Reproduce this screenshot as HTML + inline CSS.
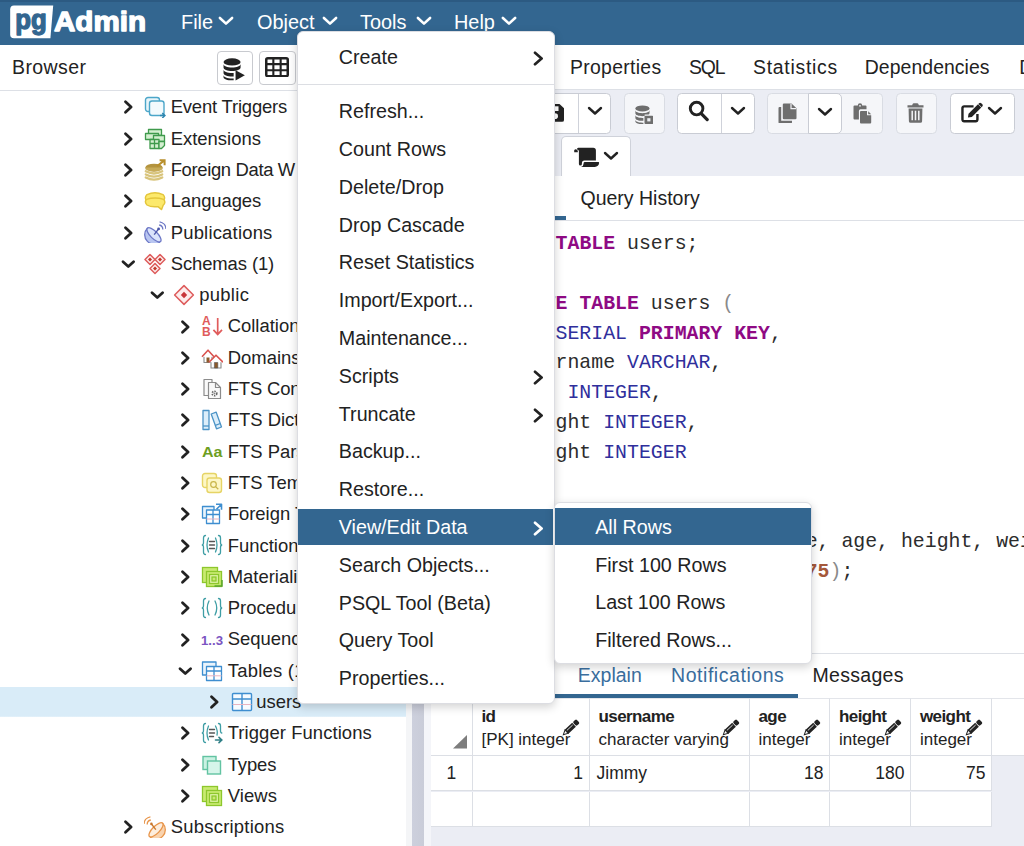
<!DOCTYPE html>
<html>
<head>
<meta charset="utf-8">
<title>pgAdmin</title>
<style>
*{box-sizing:border-box;}
html,body{margin:0;padding:0;}
body{width:1024px;height:846px;overflow:hidden;position:relative;background:#fff;font-family:"Liberation Sans",sans-serif;color:#222;font-size:19.6px;}
.abs{position:absolute;}
svg{display:block;}
/* header */
#hdr{left:0;top:0;width:1024px;height:45px;background:#336690;border-top:2px solid #2c5a82;}
.mi{position:absolute;top:11px;color:#fff;font-size:19.9px;line-height:22px;white-space:nowrap;}
.chev{position:absolute;}
/* browser bar */
#bbar{left:0;top:45px;width:412px;height:45.6px;background:#fff;border-bottom:1px solid #dde0e6;}
#bbar .t{position:absolute;left:12px;top:11px;font-size:19.5px;line-height:22px;letter-spacing:.4px;}
.bbtn{position:absolute;top:6.2px;width:36px;height:33.8px;border:1px solid #c8cacf;border-radius:4px;background:#fff;}
/* tree */
#tree{left:0;top:90.6px;width:406px;height:756px;background:#fff;overflow:hidden;}
.row{position:relative;height:31.3px;white-space:nowrap;font-size:18.45px;line-height:31.3px;}
.row.sel{background:linear-gradient(#d9ecf8,#d9ecf8) 0 0.9px/100% 29.8px no-repeat;}
.row .ar{position:absolute;top:8.1px;}
.row .ad{top:11.3px;margin-left:-1.6px;}
.row .ic{position:absolute;top:4.9px;margin-left:0.4px;}
.row .tx{position:absolute;top:0;margin-left:-0.3px;}
.l1 .ar{left:123px}.l1 .ic{left:144px}.l1 .tx{left:171px}
.l2 .ar{left:151.5px}.l2 .ic{left:172.5px}.l2 .tx{left:199.5px}
.l3 .ar{left:180px}.l3 .ic{left:201px}.l3 .tx{left:228px}
.l4 .ar{left:208.5px}.l4 .ic{left:230.5px}.l4 .tx{left:256.5px}
/* splitter */
#split{left:412.3px;top:90px;width:11.4px;height:756px;background:linear-gradient(90deg,#cdd0dd,#c9ccd8);}
#splitr{left:423.7px;top:90px;width:7.1px;height:756px;background:#f4f5f9;}
#splitl{left:405.6px;top:90px;width:6.7px;height:756px;background:#f4f5f7;}
/* right */
#rbg{left:423.5px;top:45px;width:601px;height:801px;background:#ebedf4;}
#tabs{left:423.5px;top:45px;width:601px;height:45.4px;background:#fff;border-bottom:1px solid #dde0e6;}
#tabs span{position:absolute;top:11px;font-size:19.4px;line-height:22px;white-space:nowrap;}
.tb{position:absolute;top:93px;height:41.4px;border:1px solid #c9ccd4;background:#fff;border-radius:4.5px;}
.tb.dis{background:#f5f6f9;border-color:#d9dce3;}
#qh{left:431px;top:176px;width:593px;height:45px;background:#fff;border-bottom:1px solid #dde0e6;}
#code{left:431px;top:221px;width:593px;height:432px;background:#fff;font-family:"Liberation Mono",monospace;font-size:19.85px;}
.cl{position:absolute;left:65px;white-space:pre;line-height:30px;height:30px;color:#2c2c2c;}
.k{color:#8f0a84;font-weight:bold;}
.ty{color:#2f2f9c;}
.br{color:#8a8a8a;}
.nu{color:#a5583a;font-weight:bold;}
#ltabs{left:431px;top:652.5px;width:593px;height:46px;background:#fff;border-top:1px solid #dde0e6;}
#ltabs span{position:absolute;top:11.5px;font-size:19.5px;line-height:22px;white-space:nowrap;}
/* grid */
#grid{left:431px;top:698px;width:593px;height:148px;}
.gh{position:absolute;top:0;height:57.7px;background:#fff;border-right:1px solid #dcdfe5;border-bottom:1px solid #dcdfe5;border-top:1px solid #e3e5ea;}
.gh b{position:absolute;left:9px;top:8.3px;font-size:17px;letter-spacing:-0.6px;line-height:20px;color:#222;}
.gh i{position:absolute;left:9px;top:30.7px;font-size:17px;line-height:20px;font-style:normal;color:#222;white-space:nowrap;}
.gc{position:absolute;height:35.8px;background:#fff;border-right:1px solid #dcdfe5;border-bottom:1px solid #dcdfe5;font-size:17.5px;line-height:35px;padding:0 5.5px 0 7px;}
.gc.c{text-align:center;padding:0;}
.gc.r{text-align:right;}
/* menu */
.menu{background:#fff;border:1px solid #dcdde2;border-radius:6px;box-shadow:0 3px 10px rgba(0,0,0,.18);}
.it{position:absolute;left:0;width:100%;height:37.8px;line-height:37.8px;font-size:19.7px;white-space:nowrap;color:#222;}
.it span{position:absolute;left:40.5px;top:1.2px;}
.it.hl{background:#336690;color:#fff;}
.it.hl.m{background:linear-gradient(#336690,#336690) 0 1.2px/calc(100% - 1px) 36.3px no-repeat;}
.it svg{position:absolute;right:9.55px;top:13.1px;}
</style>
</head>
<body>
<div id="hdr" class="abs">
<svg class="abs" style="left:0;top:-2px" width="160" height="45" viewBox="0 0 160 45">
<path d="M14 5.5 H53.2 L50.4 38.3 H14 Q10.2 38.3 10.2 34.5 V9.3 Q10.2 5.5 14 5.5 Z" fill="#fff"/>
<text x="15.3" y="29.3" font-family="Liberation Sans" font-weight="bold" font-size="27" fill="#336690" textLength="31.5" lengthAdjust="spacingAndGlyphs" stroke="#336690" stroke-width="1.3" stroke-linejoin="round">pg</text>
<text x="54" y="30.5" font-family="Liberation Sans" font-weight="bold" font-size="26.8" fill="#fff" textLength="92" lengthAdjust="spacingAndGlyphs" stroke="#fff" stroke-width="1.3" stroke-linejoin="round">Admin</text>
</svg>
<div class="mi" style="left:181px;top:9px">File</div><svg class="chev" style="left:218px;top:14.2px" width="16" height="11" viewBox="0 0 16 11"><path d="M1.9 2 L8 7.6 L14.1 2" fill="none" stroke="#fff" stroke-width="2.6" stroke-linecap="round" stroke-linejoin="round"/></svg>
<div class="mi" style="left:257px;top:9px">Object</div><svg class="chev" style="left:322px;top:14.2px" width="16" height="11" viewBox="0 0 16 11"><path d="M1.9 2 L8 7.6 L14.1 2" fill="none" stroke="#fff" stroke-width="2.6" stroke-linecap="round" stroke-linejoin="round"/></svg>
<div class="mi" style="left:360px;top:9px">Tools</div><svg class="chev" style="left:416px;top:14.2px" width="16" height="11" viewBox="0 0 16 11"><path d="M1.9 2 L8 7.6 L14.1 2" fill="none" stroke="#fff" stroke-width="2.6" stroke-linecap="round" stroke-linejoin="round"/></svg>
<div class="mi" style="left:454px;top:9px">Help</div><svg class="chev" style="left:501px;top:14.2px" width="16" height="11" viewBox="0 0 16 11"><path d="M1.9 2 L8 7.6 L14.1 2" fill="none" stroke="#fff" stroke-width="2.6" stroke-linecap="round" stroke-linejoin="round"/></svg>
</div>
<div id="bbar" class="abs"><span class="t">Browser</span>
<div class="bbtn" style="left:216.5px"><svg style="margin:5.8px 0 0 5.6px" width="22.4" height="23" viewBox="0 0 21 21" preserveAspectRatio="none"><g fill="#222"><ellipse cx="8.5" cy="3.6" rx="8" ry="3.3"/><path d="M0.5 5.5 c0 1.8 3.6 3.2 8 3.2 s8 -1.4 8 -3.2 v3.2 c0 1.8 -3.6 3.2 -8 3.2 s-8 -1.4 -8 -3.2z"/><path d="M0.5 10.6 c0 1.8 3.6 3.2 8 3.2 c0.5 0 1 0 1.5 -0.1 v3.2 c-0.5 0.1 -1 0.1 -1.5 0.1 c-4.4 0 -8 -1.4 -8 -3.2z"/><path d="M0.5 15.6 c0 1.8 3.6 3.2 8 3.2 c0.5 0 1 0 1.5 -0.1 v1.6 c-0.5 0.1 -1 0.1 -1.5 0.1 c-4.4 0 -8 -1.1 -8 -2.9z"/><path d="M11.8 11.2 L20.5 15.8 L11.8 20.5Z"/></g></svg></div>
<div class="bbtn" style="left:259px;width:36.5px"><svg style="margin:4.9px 0 0 5.2px" width="24" height="20.4" preserveAspectRatio="none" viewBox="0 0 23 20"><rect x="1.2" y="1.2" width="20.6" height="17.6" rx="1.5" fill="none" stroke="#222" stroke-width="2.4"/><path d="M1 7 h21 M1 13 h21 M8 1 v18 M15 1 v18" stroke="#222" stroke-width="2"/></svg></div>
</div>
<div id="tree" class="abs"><div style="height:0.8px"></div>
<div class="row l1"><svg class="ar" viewBox="0 0 12 16" width="12" height="16"><path d="M2.5 2.8 L8.1 8 L2.5 13.2" fill="none" stroke="#222" stroke-width="2.8" stroke-linecap="round" stroke-linejoin="round"/></svg><svg class="ic" viewBox="0 0 22 22" width="22" height="22"><rect x="1.5" y="1.5" width="14" height="14" rx="2.5" fill="#e8f5fa" stroke="#4ca6c9" stroke-width="1.4"/><rect x="5.5" y="5" width="14.5" height="14.5" rx="2.5" fill="#f2fafd" stroke="#4ca6c9" stroke-width="1.4"/><path d="M16 19.5 h4 M18.3 17 l2.6 2.5 l-2.6 2.5" fill="none" stroke="#2f86b0" stroke-width="1.5"/></svg><span class="tx" style="letter-spacing:-0.18px">Event Triggers</span></div>
<div class="row l1"><svg class="ar" viewBox="0 0 12 16" width="12" height="16"><path d="M2.5 2.8 L8.1 8 L2.5 13.2" fill="none" stroke="#222" stroke-width="2.8" stroke-linecap="round" stroke-linejoin="round"/></svg><svg class="ic" viewBox="0 0 22 22" width="22" height="22"><g fill="#d4efd0" stroke="#3f9a4c" stroke-width="1.3" stroke-linejoin="round"><rect x="4.5" y="1.5" width="13" height="6"/><rect x="1.5" y="5.5" width="13" height="6"/><rect x="9.5" y="7.5" width="11" height="6"/><rect x="6" y="11.5" width="9" height="9"/><path d="M15 13.5 h5.5 v4 l-3 3 h-2.5z"/><path d="M6 15.5 h9 M10.5 11.5 v9"/></g></svg><span class="tx">Extensions</span></div>
<div class="row l1"><svg class="ar" viewBox="0 0 12 16" width="12" height="16"><path d="M2.5 2.8 L8.1 8 L2.5 13.2" fill="none" stroke="#222" stroke-width="2.8" stroke-linecap="round" stroke-linejoin="round"/></svg><svg class="ic" viewBox="0 0 22 22" width="22" height="22"><g fill="none" stroke="#d8c47c" stroke-width="2.3" stroke-linecap="round"><path d="M1.8 12.2 Q10 16.8 18.2 12.2"/><path d="M1.8 15.4 Q10 20 18.2 15.4"/><path d="M1.8 18.4 Q10 23 18.2 18.4"/></g><ellipse cx="10" cy="8.6" rx="8.6" ry="3.9" fill="#b3933e"/><path d="M1.4 8.6 v1.6 q8.6 5 17.2 0 v-1.6z" fill="#c7ab58"/><path d="M13 7.2 L20 1.6 M15.6 1.2 h5 v5" fill="none" stroke="#b88f2c" stroke-width="2"/></svg><span class="tx" style="letter-spacing:-0.35px">Foreign Data W</span></div>
<div class="row l1"><svg class="ar" viewBox="0 0 12 16" width="12" height="16"><path d="M2.5 2.8 L8.1 8 L2.5 13.2" fill="none" stroke="#222" stroke-width="2.8" stroke-linecap="round" stroke-linejoin="round"/></svg><svg class="ic" viewBox="0 0 22 22" width="22" height="22"><g fill="#fce96c" stroke="#e4c63c" stroke-width="1.4" stroke-linejoin="round"><path d="M3 4.6 Q11 0.8 19 4.6 Q22.3 8 19 11 Q11 14 3 11 Q-0.3 8 3 4.6Z"/><path d="M2.6 9.3 Q11 6.6 19.6 9.3 Q22.3 12.6 19.2 15.3 L17.6 19.6 L14 16.6 Q7 17.4 3 15 Q0 12 2.6 9.3Z"/></g></svg><span class="tx" style="letter-spacing:-0.1px">Languages</span></div>
<div class="row l1"><svg class="ar" viewBox="0 0 12 16" width="12" height="16"><path d="M2.5 2.8 L8.1 8 L2.5 13.2" fill="none" stroke="#222" stroke-width="2.8" stroke-linecap="round" stroke-linejoin="round"/></svg><svg class="ic" viewBox="0 0 22 22" width="22" height="22"><g stroke="#6d78c6" stroke-width="1.3" stroke-linejoin="round"><path d="M3.4 7.2 A9.3 9.3 0 0 0 16.6 20.4 Z" fill="#b9c6f1"/><ellipse cx="10" cy="13.8" rx="9.3" ry="3.6" transform="rotate(45 10 13.8)" fill="#dbe4fb"/><path d="M10.2 13.6 L14.2 8.4" stroke="#4a55a8" stroke-width="1.4" fill="none"/><circle cx="14.6" cy="7.9" r="1.4" fill="#4a55a8" stroke="none"/><path d="M15.2 4 A4.4 4.4 0 0 1 18.8 8.4" fill="none"/><path d="M15.6 0.8 A7.6 7.6 0 0 1 22 8" fill="none"/></g></svg><span class="tx" style="letter-spacing:0.2px">Publications</span></div>
<div class="row l1"><svg class="ar ad" viewBox="0 0 15 10" width="15" height="10"><path d="M2 2.8 L7.3 7.5 L12.6 2.8" fill="none" stroke="#222" stroke-width="2.8" stroke-linecap="round" stroke-linejoin="round"/></svg><svg class="ic" viewBox="0 0 22 22" width="22" height="22"><path d="M6 1.5 L11 6.5 L6 11.5 L1 6.5Z" fill="#fdecec" stroke="#de5c5c" stroke-width="1.5" stroke-linejoin="round"/><path d="M6 4.5 L8.0 6.5 L6 8.5 L4.0 6.5Z" fill="#c0392b"/><path d="M16 1.5 L21 6.5 L16 11.5 L11 6.5Z" fill="#fdecec" stroke="#de5c5c" stroke-width="1.5" stroke-linejoin="round"/><path d="M16 4.5 L18.0 6.5 L16 8.5 L14.0 6.5Z" fill="#c0392b"/><path d="M11 10.5 L16 15.5 L11 20.5 L6 15.5Z" fill="#fdecec" stroke="#de5c5c" stroke-width="1.5" stroke-linejoin="round"/><path d="M11 13.5 L13.0 15.5 L11 17.5 L9.0 15.5Z" fill="#c0392b"/></svg><span class="tx" style="letter-spacing:-0.1px">Schemas (1)</span></div>
<div class="row l2"><svg class="ar ad" viewBox="0 0 15 10" width="15" height="10"><path d="M2 2.8 L7.3 7.5 L12.6 2.8" fill="none" stroke="#222" stroke-width="2.8" stroke-linecap="round" stroke-linejoin="round"/></svg><svg class="ic" viewBox="0 0 22 22" width="22" height="22"><path d="M11 1.6 L20.4 11 L11 20.4 L1.6 11Z" fill="#fdecec" stroke="#de5c5c" stroke-width="1.5" stroke-linejoin="round"/><path d="M11 7.8 L14.2 11 L11 14.2 L7.8 11Z" fill="#c7353a"/></svg><span class="tx" style="letter-spacing:0.3px">public</span></div>
<div class="row l3"><svg class="ar" viewBox="0 0 12 16" width="12" height="16"><path d="M2.5 2.8 L8.1 8 L2.5 13.2" fill="none" stroke="#222" stroke-width="2.8" stroke-linecap="round" stroke-linejoin="round"/></svg><svg class="ic" viewBox="0 0 22 22" width="22" height="22"><text x="1" y="10" font-family="Liberation Sans" font-weight="bold" font-size="12" fill="#e05c5c">A</text><text x="1" y="21.3" font-family="Liberation Sans" font-weight="bold" font-size="12" fill="#e05c5c">B</text><path d="M16.7 3 V19 M12.4 14.8 L16.7 19.4 L21 14.8" fill="none" stroke="#e05c5c" stroke-width="1.7"/></svg><span class="tx">Collations</span></div>
<div class="row l3"><svg class="ar" viewBox="0 0 12 16" width="12" height="16"><path d="M2.5 2.8 L8.1 8 L2.5 13.2" fill="none" stroke="#222" stroke-width="2.8" stroke-linecap="round" stroke-linejoin="round"/></svg><svg class="ic" viewBox="0 0 22 22" width="22" height="22"><g stroke-linejoin="round"><path d="M3 9.5 V15.5 H11 V9.5" fill="#fff" stroke="#8a8a8a" stroke-width="1.1"/><path d="M1 9.8 L7 3.2 L13 9.8" fill="#fff" stroke="#d9534f" stroke-width="1.6"/><rect x="5.5" y="10.5" width="3" height="5" fill="#8b5a2b"/><path d="M10 15 V21 H20 V15" fill="#fff" stroke="#8a8a8a" stroke-width="1.1"/><path d="M8 15.2 L15 8.2 L22 15.2" fill="#fff" stroke="#d9534f" stroke-width="1.6"/><rect x="13.4" y="15.5" width="3.4" height="5.5" fill="#8b5a2b" stroke="#555" stroke-width="0.6"/></g></svg><span class="tx">Domains</span></div>
<div class="row l3"><svg class="ar" viewBox="0 0 12 16" width="12" height="16"><path d="M2.5 2.8 L8.1 8 L2.5 13.2" fill="none" stroke="#222" stroke-width="2.8" stroke-linecap="round" stroke-linejoin="round"/></svg><svg class="ic" viewBox="0 0 22 22" width="22" height="22"><g fill="#fafafa" stroke="#8c8c8c" stroke-width="1.2" stroke-linejoin="round"><path d="M3 1.5 H11 V17.5 H3Z"/><path d="M7.5 4.5 H14.5 L19.5 9.5 V20.5 H7.5Z"/><path d="M14.5 4.5 V9.5 H19.5" fill="none"/></g><circle cx="13.5" cy="15.5" r="2.3" fill="none" stroke="#666" stroke-width="1.6" stroke-dasharray="1.4 1"/><circle cx="13.5" cy="15.5" r="1" fill="#888"/></svg><span class="tx" style="letter-spacing:-0.15px">FTS Configurations</span></div>
<div class="row l3"><svg class="ar" viewBox="0 0 12 16" width="12" height="16"><path d="M2.5 2.8 L8.1 8 L2.5 13.2" fill="none" stroke="#222" stroke-width="2.8" stroke-linecap="round" stroke-linejoin="round"/></svg><svg class="ic" viewBox="0 0 22 22" width="22" height="22"><g fill="#dceefa" stroke="#4b93c6" stroke-width="1.3" stroke-linejoin="round"><rect x="2" y="1.5" width="6" height="19"/><path d="M2 17 h6" /><path d="M10.2 5 L15.2 3.2 L20.5 18 L15.5 19.8Z"/><path d="M14.3 16.3 L19.3 14.5"/></g></svg><span class="tx">FTS Dictionaries</span></div>
<div class="row l3"><svg class="ar" viewBox="0 0 12 16" width="12" height="16"><path d="M2.5 2.8 L8.1 8 L2.5 13.2" fill="none" stroke="#222" stroke-width="2.8" stroke-linecap="round" stroke-linejoin="round"/></svg><svg class="ic" viewBox="0 0 22 22" width="22" height="22"><text x="1" y="16.2" font-family="Liberation Sans" font-weight="bold" font-size="15" fill="#6d9e1f" textLength="20.5" lengthAdjust="spacingAndGlyphs">Aa</text></svg><span class="tx">FTS Parsers</span></div>
<div class="row l3"><svg class="ar" viewBox="0 0 12 16" width="12" height="16"><path d="M2.5 2.8 L8.1 8 L2.5 13.2" fill="none" stroke="#222" stroke-width="2.8" stroke-linecap="round" stroke-linejoin="round"/></svg><svg class="ic" viewBox="0 0 22 22" width="22" height="22"><g fill="#fdf7c6" stroke="#e6d465" stroke-width="1.4"><rect x="1.5" y="1.5" width="14" height="14" rx="2.5"/><rect x="6" y="6" width="14.5" height="14.5" rx="2.5"/></g><circle cx="12.5" cy="12.5" r="2.8" fill="none" stroke="#c9b64a" stroke-width="1.2"/><path d="M14.6 14.6 L17.3 17.3" stroke="#c9b64a" stroke-width="1.3"/></svg><span class="tx">FTS Templates</span></div>
<div class="row l3"><svg class="ar" viewBox="0 0 12 16" width="12" height="16"><path d="M2.5 2.8 L8.1 8 L2.5 13.2" fill="none" stroke="#222" stroke-width="2.8" stroke-linecap="round" stroke-linejoin="round"/></svg><svg class="ic" viewBox="0 0 22 22" width="22" height="22"><g stroke="#3e8ed0" stroke-width="1.3" fill="#eaf4fc" stroke-linejoin="round"><path d="M1.5 3.5 H13 V15 H1.5Z"/><rect x="5.5" y="7" width="13" height="13.5" fill="#fff"/><path d="M5.5 11.5 h13 M12 7 v13.5" fill="none"/><path d="M5.5 16 h13" stroke="#e8b4c0" stroke-width="1"/><path d="M15 1.3 h5.5 v5.5 M20.5 1.3 L15.5 6.3" fill="none" stroke-width="1.6"/></g></svg><span class="tx">Foreign Tables</span></div>
<div class="row l3"><svg class="ar" viewBox="0 0 12 16" width="12" height="16"><path d="M2.5 2.8 L8.1 8 L2.5 13.2" fill="none" stroke="#222" stroke-width="2.8" stroke-linecap="round" stroke-linejoin="round"/></svg><svg class="ic" viewBox="0 0 22 22" width="22" height="22"><g fill="none" stroke="#3f9ea5" stroke-width="1.3" stroke-linecap="round"><path d="M4.5 1.5 Q2.5 1.5 2.5 4 V8.5 Q2.5 11 0.8 11 Q2.5 11 2.5 13.5 V18 Q2.5 20.5 4.5 20.5"/><path d="M17.5 1.5 Q19.5 1.5 19.5 4 V8.5 Q19.5 11 21.2 11 Q19.5 11 19.5 13.5 V18 Q19.5 20.5 17.5 20.5"/><path d="M7.5 4 Q4.5 11 7.5 18"/><path d="M14.5 4 Q17.5 11 14.5 18"/><path d="M8.5 7.5 h5 M8.5 11 h5 M8.5 14.5 h5" stroke="#555" stroke-width="1.4"/></g></svg><span class="tx">Functions</span></div>
<div class="row l3"><svg class="ar" viewBox="0 0 12 16" width="12" height="16"><path d="M2.5 2.8 L8.1 8 L2.5 13.2" fill="none" stroke="#222" stroke-width="2.8" stroke-linecap="round" stroke-linejoin="round"/></svg><svg class="ic" viewBox="0 0 22 22" width="22" height="22"><g fill="#c9ea72" stroke="#8dc72c" stroke-width="1.3"><rect x="1.5" y="1.5" width="15" height="15"/><rect x="5.5" y="5.5" width="15" height="15"/><rect x="8.5" y="8.5" width="9" height="9" fill="#e3f5b0"/><rect x="11" y="11" width="4" height="4" fill="#c9ea72"/></g><path d="M13.5 20 h7.5 v-6" fill="none" stroke="#5aa52c" stroke-width="1.5"/></svg><span class="tx">Materialized Views</span></div>
<div class="row l3"><svg class="ar" viewBox="0 0 12 16" width="12" height="16"><path d="M2.5 2.8 L8.1 8 L2.5 13.2" fill="none" stroke="#222" stroke-width="2.8" stroke-linecap="round" stroke-linejoin="round"/></svg><svg class="ic" viewBox="0 0 22 22" width="22" height="22"><g fill="none" stroke="#3f9ea5" stroke-width="1.3" stroke-linecap="round"><path d="M4.5 1.5 Q2.5 1.5 2.5 4 V8.5 Q2.5 11 0.8 11 Q2.5 11 2.5 13.5 V18 Q2.5 20.5 4.5 20.5"/><path d="M17.5 1.5 Q19.5 1.5 19.5 4 V8.5 Q19.5 11 21.2 11 Q19.5 11 19.5 13.5 V18 Q19.5 20.5 17.5 20.5"/><path d="M8 4 Q4.5 11 8 18"/><path d="M14 4 Q17.5 11 14 18"/></g></svg><span class="tx">Procedures</span></div>
<div class="row l3"><svg class="ar" viewBox="0 0 12 16" width="12" height="16"><path d="M2.5 2.8 L8.1 8 L2.5 13.2" fill="none" stroke="#222" stroke-width="2.8" stroke-linecap="round" stroke-linejoin="round"/></svg><svg class="ic" viewBox="0 0 22 22" width="22" height="22"><text x="0" y="16.5" font-family="Liberation Sans" font-weight="bold" font-size="13" fill="#7b55c2" textLength="22" lengthAdjust="spacingAndGlyphs">1..3</text></svg><span class="tx">Sequences</span></div>
<div class="row l3"><svg class="ar ad" viewBox="0 0 15 10" width="15" height="10"><path d="M2 2.8 L7.3 7.5 L12.6 2.8" fill="none" stroke="#222" stroke-width="2.8" stroke-linecap="round" stroke-linejoin="round"/></svg><svg class="ic" viewBox="0 0 22 22" width="22" height="22"><g stroke="#3e8ed0" stroke-width="1.3" fill="#eaf4fc" stroke-linejoin="round"><path d="M1.5 2 H15 V15 H1.5Z"/><rect x="5.5" y="6.5" width="15" height="14" fill="#fff"/><path d="M5.5 11 h15 M13 6.5 v14" fill="none"/><path d="M5.5 15.8 h15" stroke="#e8b4c0" stroke-width="1"/></g></svg><span class="tx" style="letter-spacing:0.25px">Tables (1)</span></div>
<div class="row l4 sel"><svg class="ar" viewBox="0 0 12 16" width="12" height="16"><path d="M2.5 2.8 L8.1 8 L2.5 13.2" fill="none" stroke="#222" stroke-width="2.8" stroke-linecap="round" stroke-linejoin="round"/></svg><svg class="ic" viewBox="0 0 22 22" width="22" height="22"><g stroke="#3e8ed0" stroke-width="1.4" fill="#f6fbff" stroke-linejoin="round"><rect x="1.5" y="2.5" width="19" height="17" rx="1"/><path d="M1.5 8 h19 M11 2.5 v17" fill="none"/><path d="M1.5 13.5 h19" stroke="#e8b4c0" stroke-width="1"/></g></svg><span class="tx">users</span></div>
<div class="row l3"><svg class="ar" viewBox="0 0 12 16" width="12" height="16"><path d="M2.5 2.8 L8.1 8 L2.5 13.2" fill="none" stroke="#222" stroke-width="2.8" stroke-linecap="round" stroke-linejoin="round"/></svg><svg class="ic" viewBox="0 0 22 22" width="22" height="22"><g fill="none" stroke="#3f9ea5" stroke-width="1.3" stroke-linecap="round"><path d="M4.5 1.5 Q2.5 1.5 2.5 4 V8.5 Q2.5 11 0.8 11 Q2.5 11 2.5 13.5 V18 Q2.5 20.5 4.5 20.5"/><path d="M17.5 1.5 Q19.5 1.5 19.5 4 V8.5 Q19.5 11 20.8 11"/><path d="M7.5 4 Q4.5 11 7.5 18"/><path d="M14.5 4 Q17 9 16 13"/><path d="M8.5 7.5 h5 M8.5 11 h5 M8.5 14.5 h4" stroke="#555" stroke-width="1.4"/><path d="M14.5 18 h5.5 M18 15.3 l2.8 2.7 l-2.8 2.7" stroke="#2f7f86" stroke-width="1.6"/></g></svg><span class="tx" style="letter-spacing:0.08px">Trigger Functions</span></div>
<div class="row l3"><svg class="ar" viewBox="0 0 12 16" width="12" height="16"><path d="M2.5 2.8 L8.1 8 L2.5 13.2" fill="none" stroke="#222" stroke-width="2.8" stroke-linecap="round" stroke-linejoin="round"/></svg><svg class="ic" viewBox="0 0 22 22" width="22" height="22"><g fill="#c9f1e2" stroke="#62c3a2" stroke-width="1.4"><rect x="2" y="2.5" width="13" height="13"/><rect x="6.5" y="7" width="13" height="13" fill="#d6f5ea"/></g></svg><span class="tx" style="letter-spacing:-0.1px">Types</span></div>
<div class="row l3"><svg class="ar" viewBox="0 0 12 16" width="12" height="16"><path d="M2.5 2.8 L8.1 8 L2.5 13.2" fill="none" stroke="#222" stroke-width="2.8" stroke-linecap="round" stroke-linejoin="round"/></svg><svg class="ic" viewBox="0 0 22 22" width="22" height="22"><g fill="#c9ea72" stroke="#8dc72c" stroke-width="1.3"><rect x="1.5" y="1.5" width="15" height="15"/><rect x="5.5" y="5.5" width="15" height="15"/><rect x="8.5" y="8.5" width="9" height="9" fill="#e3f5b0"/><rect x="11" y="11" width="4" height="4" fill="#c9ea72"/></g></svg><span class="tx" style="letter-spacing:0.1px">Views</span></div>
<div class="row l1"><svg class="ar" viewBox="0 0 12 16" width="12" height="16"><path d="M2.5 2.8 L8.1 8 L2.5 13.2" fill="none" stroke="#222" stroke-width="2.8" stroke-linecap="round" stroke-linejoin="round"/></svg><svg class="ic" viewBox="0 0 22 22" width="22" height="22"><g transform="translate(22,0) scale(-1,1)" stroke="#e8954a" stroke-width="1.3" stroke-linejoin="round"><path d="M3.4 7.2 A9.3 9.3 0 0 0 16.6 20.4 Z" fill="#f9d3ae"/><ellipse cx="10" cy="13.8" rx="9.3" ry="3.6" transform="rotate(45 10 13.8)" fill="#fdeede"/><path d="M10.2 13.6 L14.2 8.4" stroke="#c9762a" stroke-width="1.4" fill="none"/><circle cx="14.6" cy="7.9" r="1.3" fill="#c9762a" stroke="none"/><path d="M15.2 4 A4.4 4.4 0 0 1 18.8 8.4" fill="none"/><path d="M15.6 0.8 A7.6 7.6 0 0 1 22 8" fill="none"/></g></svg><span class="tx" style="letter-spacing:0.24px">Subscriptions</span></div>
</div>
<div id="splitl" class="abs"></div><div id="split" class="abs"></div>
<div id="rbg" class="abs"></div><div id="splitr" class="abs"></div>
<div id="tabs" class="abs">
<span style="left:146.5px;letter-spacing:.3px">Properties</span><span style="left:265.5px;letter-spacing:-1.1px">SQL</span><span style="left:329.5px;letter-spacing:.74px">Statistics</span><span style="left:441.3px;letter-spacing:.07px">Dependencies</span><span style="left:595.8px">Dependents</span>
</div>
<div class="tb" style="left:530px;width:80.5px"><div class="abs" style="left:46.5px;top:0;width:1px;height:39.4px;background:#cfd2da"></div><svg class="abs" style="left:14px;top:8.85px" width="20" height="19.8" viewBox="0 0 20 21" preserveAspectRatio="none"><path d="M1 3 a2 2 0 0 1 2 -2 h11.5 l4.5 4.5 v12.5 a2 2 0 0 1 -2 2 h-14 a2 2 0 0 1 -2 -2z" fill="#222"/><rect x="3.5" y="3.5" width="10" height="5" fill="#fff"/><circle cx="10" cy="14" r="3" fill="#fff"/></svg><svg class="abs" style="left:55.6px;top:12.35px" width="16" height="10" viewBox="0 0 16 10"><path d="M2 2 L8 7.5 L14 2" fill="none" stroke="#222" stroke-width="2.4" stroke-linecap="round" stroke-linejoin="round"/></svg></div>
<div class="tb dis" style="left:623.5px;width:41px"><svg class="abs" style="left:10.3px;top:10.7px" width="18.6" height="19.8" viewBox="0 0 20 21" preserveAspectRatio="none"><g fill="#6e6e6e"><ellipse cx="8" cy="3.6" rx="7.6" ry="3.2"/><path d="M0.4 5.6 c0 1.8 3.4 3.1 7.6 3.1 s7.6 -1.3 7.6 -3.1 v3.1 c0 0.6 -0.4 1.1 -1 1.5 h-4.2 v1.6 c-0.8 0.1 -1.6 0.1 -2.4 0.1 c-4.2 0 -7.6 -1.3 -7.6 -3.1z"/><path d="M0.4 10.7 c0 1.8 3.4 3.1 7.6 3.1 h1 v3 h-1 c-4.2 0 -7.6 -1.3 -7.6 -3.1z"/><path d="M0.4 15.7 c0 1.8 3.4 3.1 7.6 3.1 h1 v1.6 h-1 c-4.2 0 -7.6 -1.1 -7.6 -2.9z"/><rect x="10.2" y="11.5" width="9.4" height="8.6" rx="1"/></g><rect x="13.2" y="14" width="3.4" height="3.4" fill="#eef0f4"/></svg></div>
<div class="tb" style="left:676.5px;width:78.5px"><div class="abs" style="left:43.5px;top:0;width:1px;height:39.4px;background:#cfd2da"></div><svg class="abs" style="left:10.25px;top:6.45px" width="21" height="22" viewBox="0 0 21 22"><circle cx="8.6" cy="8.6" r="6.3" fill="none" stroke="#222" stroke-width="2.9"/><path d="M13.3 13.6 L19.2 19.6" stroke="#222" stroke-width="3.2" stroke-linecap="round"/></svg><svg class="abs" style="left:52.2px;top:12.35px" width="16" height="10" viewBox="0 0 16 10"><path d="M2 2 L8 7.5 L14 2" fill="none" stroke="#222" stroke-width="2.4" stroke-linecap="round" stroke-linejoin="round"/></svg></div>
<div class="tb dis" style="left:766.5px;width:116px"></div>
<div class="tb" style="left:808px;width:33.5px;border-radius:0 5px 5px 0"></div><svg class="abs" style="left:816.7px;top:107.2px" width="16" height="10" viewBox="0 0 16 10"><path d="M2 2 L8 7.5 L14 2" fill="none" stroke="#222" stroke-width="2.4" stroke-linecap="round" stroke-linejoin="round"/></svg>
<svg class="abs" style="left:777.5px;top:102.7px" width="19" height="20.8" viewBox="0 0 19 22" preserveAspectRatio="none"><g fill="#6e6e6e"><path d="M6 0.5 h7.5 l5 5 v10.5 a1.2 1.2 0 0 1 -1.2 1.2 h-11.3 a1.2 1.2 0 0 1 -1.2 -1.2 v-14.3 a1.2 1.2 0 0 1 1.2 -1.2z"/><path d="M3.2 4.2 v14.6 h10.8 v1.5 a1.2 1.2 0 0 1 -1.2 1.2 h-11.1 a1.2 1.2 0 0 1 -1.2 -1.2 v-14.9 a1.2 1.2 0 0 1 1.2 -1.2z"/></g><path d="M13 0.8 v5.2 h5.2" fill="none" stroke="#f0f1f5" stroke-width="1.2"/></svg>
<svg class="abs" style="left:852.5px;top:103px" width="19" height="21" viewBox="0 0 19 21"><g fill="#6e6e6e"><path d="M1.5 2.5 h3.3 a2.2 2.2 0 0 1 4.4 0 h3.3 a1 1 0 0 1 1 1 v2.8 h-6 a1.6 1.6 0 0 0 -1.6 1.6 v8.6 h-4.4 a1 1 0 0 1 -1 -1 v-12 a1 1 0 0 1 1 -1z"/><path d="M8 8 h6 v4.2 h4.2 v7.3 a1 1 0 0 1 -1 1 h-9.2 a1 1 0 0 1 -1 -1 v-10.5 a1 1 0 0 1 1 -1z"/><path d="M15.2 8.2 l3 3 h-3z"/></g><circle cx="7" cy="2.8" r="0.9" fill="#f0f1f5"/></svg>
<div class="tb dis" style="left:895.5px;width:41.5px"><svg class="abs" style="left:10.5px;top:8.9px" width="17" height="20" viewBox="0 0 17 20"><g fill="#6e6e6e"><path d="M0.5 2.2 h4.6 l0.7 -1.4 a0.9 0.9 0 0 1 0.8 -0.5 h3.8 a0.9 0.9 0 0 1 0.8 0.5 l0.7 1.4 h4.6 v2.3 h-16z"/><path d="M1.6 5.6 h13.8 l-0.3 12.6 a1.6 1.6 0 0 1 -1.6 1.5 h-10 a1.6 1.6 0 0 1 -1.6 -1.5z"/></g><path d="M5.2 7.8 v9.4 M8.5 7.8 v9.4 M11.8 7.8 v9.4" stroke="#f5f6f9" stroke-width="1.5"/></svg></div>
<div class="tb" style="left:949.5px;width:65.5px"><svg class="abs" style="left:10.15px;top:8.35px" width="23.2" height="21.2" viewBox="0 0 24 22" preserveAspectRatio="none"><path d="M13 4.5 H3.2 a1.7 1.7 0 0 0 -1.7 1.7 v12.1 a1.7 1.7 0 0 0 1.7 1.7 h12.1 a1.7 1.7 0 0 0 1.7 -1.7 V12.5" fill="none" stroke="#222" stroke-width="2.5"/><path d="M7.8 12.2 L17.6 2.4 L21 5.8 L11.2 15.6 L7.2 16.2Z" fill="#222"/><path d="M18.6 1.4 a1.7 1.7 0 0 1 2.4 0 l1 1 a1.7 1.7 0 0 1 0 2.4 l-0.6 0.6 l-3.4 -3.4z" fill="#222"/></svg><svg class="abs" style="left:36.6px;top:12.35px" width="16" height="10" viewBox="0 0 16 10"><path d="M2 2 L8 7.5 L14 2" fill="none" stroke="#222" stroke-width="2.4" stroke-linecap="round" stroke-linejoin="round"/></svg></div>
<div class="abs" style="left:561px;top:136px;width:70px;height:41px;border:1px solid #cfd2da;border-bottom:none;border-radius:5px 5px 0 0;background:#fff"></div>
<svg class="abs" style="left:573.5px;top:147px" width="26" height="21" viewBox="0 0 26 21"><g fill="#222"><path d="M5.2 0.8 H19.2 a2.7 2.7 0 0 1 2.7 2.7 V13.6 H10.4 a2.5 2.5 0 0 0 -2.5 2.5 v0.9 a1.5 1.5 0 0 1 -3 0 V4.3 a1.8 1.8 0 0 0 -1.8 -1.8 h-0.2 a1.8 1.8 0 0 1 2.3 -1.7z"/><path d="M0.2 3.2 a2 2 0 0 1 3.6 1 v1 h-3.6z"/><path d="M11 15 h13.2 a0.9 0.9 0 0 1 0.9 1.1 a4.4 4.4 0 0 1 -4.4 3.8 h-13.6 a3.4 3.4 0 0 0 2.5 -3.3 v-0.4 a1.3 1.3 0 0 1 1.4 -1.2z"/></g></svg>
<svg class="abs" style="left:602.5px;top:150.65px" width="16" height="10" viewBox="0 0 16 10"><path d="M2 2 L8 7.5 L14 2" fill="none" stroke="#222" stroke-width="2.4" stroke-linecap="round" stroke-linejoin="round"/></svg>
<div id="qh" class="abs"><span class="abs" style="left:149.5px;top:11px;font-size:19.5px;line-height:22px;white-space:nowrap">Query History</span><div class="abs" style="left:0;top:40px;width:134.5px;height:4px;background:#336690"></div></div>
<div id="code" class="abs"><div class="cl" style="top:8.10px"><span class="k">DROP</span> <span class="k">TABLE</span> users;</div><div class="cl" style="top:67.76px"><span class="k">CREATE</span> <span class="k">TABLE</span> users <span class="br">(</span></div><div class="cl" style="top:97.59px">  id <span class="ty">SERIAL</span> <span class="k">PRIMARY</span> <span class="k">KEY</span>,</div><div class="cl" style="top:127.42px">  username <span class="ty">VARCHAR</span>,</div><div class="cl" style="top:157.25px">  age <span class="ty">INTEGER</span>,</div><div class="cl" style="top:187.08px">  height <span class="ty">INTEGER</span>,</div><div class="cl" style="top:216.91px">  weight <span class="ty">INTEGER</span></div><div class="cl" style="top:246.74px"><span class="br">)</span>;</div><div class="cl" style="top:306.40px"><span class="k">INSERT</span> <span class="k">INTO</span> users <span class="br">(</span>username, age, height, weight<span class="br">)</span></div><div class="cl" style="top:336.23px"><span class="k">VALUES</span> <span class="br">(</span>'Jimmy', <span class="nu">18</span>, <span class="nu">180</span>, <span class="nu">75</span><span class="br">)</span>;</div></div>
<div id="ltabs" class="abs">
<span style="left:17px;color:#222">Data Output</span><span style="left:146.8px;top:10.8px;color:#3a6e9e">Explain</span><span style="left:240px;top:10.8px;color:#3a6e9e;letter-spacing:.55px">Notifications</span><span style="left:381.5px;top:10.8px;color:#222;letter-spacing:.3px">Messages</span>
<div class="abs" style="left:0;top:40.5px;width:367px;height:4.5px;background:#336690"></div>
</div>
<div id="grid" class="abs"><div class="abs" style="left:0;top:0;width:593px;height:57.7px;background:#fff;border-bottom:1px solid #dcdfe5;border-top:1px solid #e3e5ea"></div><div class="gh" style="left:0px;width:41.5px"><svg class="abs" style="left:21.8px;top:36.3px" width="14" height="13.6" viewBox="0 0 14 13.6"><path d="M14 0 V13.6 H0Z" fill="#7d7d7d"/></svg></div><div class="gh" style="left:41.5px;width:117px"><b>id</b><i>[PK] integer</i><svg class="abs" style="right:8.2px;top:19.5px" width="18" height="17" viewBox="0 0 18 17"><g transform="translate(1.2,15.8) rotate(-43)"><path d="M0.2 0 L4.6 -2.3 L4.6 2.3Z" fill="#fff" stroke="#222" stroke-width="1"/><rect x="4.6" y="-2.7" width="10.2" height="5.4" fill="#222"/><path d="M5.6 -0.7 H13.6" stroke="#fff" stroke-width="0.8"/><rect x="15.5" y="-2.7" width="4.6" height="5.4" rx="1.3" fill="#222"/></g></svg></div><div class="gh" style="left:158.5px;width:160px"><b>username</b><i>character varying</i><svg class="abs" style="right:8.2px;top:19.5px" width="18" height="17" viewBox="0 0 18 17"><g transform="translate(1.2,15.8) rotate(-43)"><path d="M0.2 0 L4.6 -2.3 L4.6 2.3Z" fill="#fff" stroke="#222" stroke-width="1"/><rect x="4.6" y="-2.7" width="10.2" height="5.4" fill="#222"/><path d="M5.6 -0.7 H13.6" stroke="#fff" stroke-width="0.8"/><rect x="15.5" y="-2.7" width="4.6" height="5.4" rx="1.3" fill="#222"/></g></svg></div><div class="gh" style="left:318.5px;width:80.5px"><b>age</b><i>integer</i><svg class="abs" style="right:8.2px;top:19.5px" width="18" height="17" viewBox="0 0 18 17"><g transform="translate(1.2,15.8) rotate(-43)"><path d="M0.2 0 L4.6 -2.3 L4.6 2.3Z" fill="#fff" stroke="#222" stroke-width="1"/><rect x="4.6" y="-2.7" width="10.2" height="5.4" fill="#222"/><path d="M5.6 -0.7 H13.6" stroke="#fff" stroke-width="0.8"/><rect x="15.5" y="-2.7" width="4.6" height="5.4" rx="1.3" fill="#222"/></g></svg></div><div class="gh" style="left:399px;width:81px"><b>height</b><i>integer</i><svg class="abs" style="right:8.2px;top:19.5px" width="18" height="17" viewBox="0 0 18 17"><g transform="translate(1.2,15.8) rotate(-43)"><path d="M0.2 0 L4.6 -2.3 L4.6 2.3Z" fill="#fff" stroke="#222" stroke-width="1"/><rect x="4.6" y="-2.7" width="10.2" height="5.4" fill="#222"/><path d="M5.6 -0.7 H13.6" stroke="#fff" stroke-width="0.8"/><rect x="15.5" y="-2.7" width="4.6" height="5.4" rx="1.3" fill="#222"/></g></svg></div><div class="gh" style="left:480px;width:81px"><b>weight</b><i>integer</i><svg class="abs" style="right:8.2px;top:19.5px" width="18" height="17" viewBox="0 0 18 17"><g transform="translate(1.2,15.8) rotate(-43)"><path d="M0.2 0 L4.6 -2.3 L4.6 2.3Z" fill="#fff" stroke="#222" stroke-width="1"/><rect x="4.6" y="-2.7" width="10.2" height="5.4" fill="#222"/><path d="M5.6 -0.7 H13.6" stroke="#fff" stroke-width="0.8"/><rect x="15.5" y="-2.7" width="4.6" height="5.4" rx="1.3" fill="#222"/></g></svg></div><div class="gc c" style="left:0px;top:57.7px;width:41.5px">1</div><div class="gc r" style="left:41.5px;top:57.7px;width:117px">1</div><div class="gc" style="left:158.5px;top:57.7px;width:160px">Jimmy</div><div class="gc r" style="left:318.5px;top:57.7px;width:80.5px">18</div><div class="gc r" style="left:399px;top:57.7px;width:81px">180</div><div class="gc r" style="left:480px;top:57.7px;width:81px">75</div><div class="gc c" style="left:0px;top:93.5px;width:41.5px"></div><div class="gc r" style="left:41.5px;top:93.5px;width:117px"></div><div class="gc" style="left:158.5px;top:93.5px;width:160px"></div><div class="gc r" style="left:318.5px;top:93.5px;width:80.5px"></div><div class="gc r" style="left:399px;top:93.5px;width:81px"></div><div class="gc r" style="left:480px;top:93.5px;width:81px"></div></div>
<div class="menu abs" style="left:297.3px;top:31px;width:257.7px;height:673px"><div class="it" style="top:6.10px"><span>Create</span><svg width="11" height="15" viewBox="0 0 11 15"><path d="M2 1.8 L8.6 7.5 L2 13.2" fill="none" stroke="#222" stroke-width="2.7" stroke-linecap="round" stroke-linejoin="round"/></svg></div><div class="abs" style="left:0;top:51.5px;width:100%;height:1px;background:#dcdee3"></div><div class="it" style="top:60.10px"><span>Refresh...</span></div><div class="it" style="top:97.90px"><span>Count Rows</span></div><div class="it" style="top:135.70px"><span>Delete/Drop</span></div><div class="it" style="top:173.50px"><span>Drop Cascade</span></div><div class="it" style="top:211.30px"><span>Reset Statistics</span></div><div class="it" style="top:249.10px"><span>Import/Export...</span></div><div class="it" style="top:286.90px"><span>Maintenance...</span></div><div class="it" style="top:324.70px"><span>Scripts</span><svg width="11" height="15" viewBox="0 0 11 15"><path d="M2 1.8 L8.6 7.5 L2 13.2" fill="none" stroke="#222" stroke-width="2.7" stroke-linecap="round" stroke-linejoin="round"/></svg></div><div class="it" style="top:362.50px"><span>Truncate</span><svg width="11" height="15" viewBox="0 0 11 15"><path d="M2 1.8 L8.6 7.5 L2 13.2" fill="none" stroke="#222" stroke-width="2.7" stroke-linecap="round" stroke-linejoin="round"/></svg></div><div class="it" style="top:400.30px"><span>Backup...</span></div><div class="it" style="top:438.10px"><span>Restore...</span></div><div class="it hl m" style="top:475.90px"><span>View/Edit Data</span><svg width="11" height="15" viewBox="0 0 11 15"><path d="M2 1.8 L8.6 7.5 L2 13.2" fill="none" stroke="#fff" stroke-width="2.7" stroke-linecap="round" stroke-linejoin="round"/></svg></div><div class="it" style="top:513.70px"><span>Search Objects...</span></div><div class="it" style="top:551.50px"><span>PSQL Tool (Beta)</span></div><div class="it" style="top:589.30px"><span>Query Tool</span></div><div class="it" style="top:627.10px"><span>Properties...</span></div></div>
<div class="menu abs" style="left:554.2px;top:501.5px;width:257.5px;height:162.5px"><div class="it hl" style="top:5.10px"><span style="left:40px">All Rows</span></div><div class="it" style="top:42.90px"><span style="left:40px">First 100 Rows</span></div><div class="it" style="top:80.70px"><span style="left:40px">Last 100 Rows</span></div><div class="it" style="top:118.50px"><span style="left:40px">Filtered Rows...</span></div></div>
</body>
</html>
